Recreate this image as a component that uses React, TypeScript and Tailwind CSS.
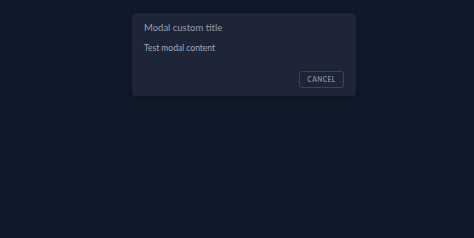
export default function App() {
  return (
    <div
      className="min-h-[238px] w-full bg-[#111a2b] flex justify-center pt-[13px]"
      style={{ fontFamily: "Lato, 'Open Sans', sans-serif" }}
    >
      <div className="ml-[14px] w-[224px] h-[83px] rounded-[4px] bg-[#1d2536] shadow-[0_2px_8px_rgba(0,0,0,0.35)] px-3 pt-[8px] flex flex-col">
        <h2 className="text-[9.5px] leading-[14px] text-[#959eae]">Modal custom title</h2>
        <p className="mt-[7px] text-[8.5px] leading-[12px] text-[#a3abb8]">Test modal content</p>
        <div className="mt-auto mb-[8px] flex justify-end">
          <button className="w-[45px] h-[17px] rounded-[3px] border border-[#3b4456] text-[6.5px] font-bold tracking-[0.08em] text-[#848d9d]">
            CANCEL
          </button>
        </div>
      </div>
    </div>
  );
}
